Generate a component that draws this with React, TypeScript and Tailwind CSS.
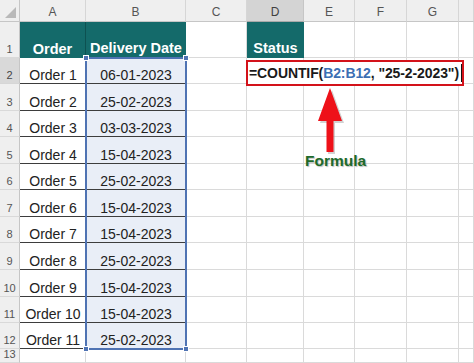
import React from "react";

const colLabels = ["A", "B", "C", "D", "E", "F", "G", ""];
const orders = Array.from({ length: 11 }, (_, i) => `Order ${i + 1}`);
const dates = [
  "06-01-2023",
  "25-02-2023",
  "03-03-2023",
  "15-04-2023",
  "25-02-2023",
  "15-04-2023",
  "15-04-2023",
  "25-02-2023",
  "15-04-2023",
  "15-04-2023",
  "25-02-2023",
];

function Cell({ r, c }: { r: number; c: number }) {
  // header row
  if (r === 0) {
    if (c === 0) {
      return (
        <div className="flex items-end justify-end p-[3px] bg-[#efefef] border-r border-b border-[#c6c6c6]">
          <svg width="11" height="11" viewBox="0 0 11 11">
            <polygon points="11,0 11,11 0,11" fill="#b9b9b9" />
          </svg>
        </div>
      );
    }
    const label = colLabels[c - 1];
    const sel = label === "D";
    return (
      <div
        className={
          sel
            ? "flex items-center justify-center bg-[#d4d4d4] border-r border-b border-r-[#c6c6c6] border-b-[#a9a9a9] text-[12px] leading-none text-[#3f3f3f] pt-[3px]"
            : "flex items-center justify-center bg-[#efefef] border-r border-b border-r-[#d6d6d6] border-b-[#c6c6c6] text-[12px] leading-none text-[#555555] pt-[3px]"
        }
      >
        {label}
      </div>
    );
  }
  // row header
  if (c === 0) {
    return (
      <div
        className={
          r === 2
            ? "flex items-end justify-center bg-[#d9d9d9] border-r border-b border-r-[#c6c6c6] border-b-[#d6d6d6] text-[11px] leading-none text-[#444444] pb-[2px]"
            : "flex items-end justify-center bg-[#efefef] border-r border-b border-r-[#c6c6c6] border-b-[#d9d9d9] text-[11px] leading-none text-[#555555] pb-[2px]"
        }
      >
        {r}
      </div>
    );
  }
  // row 1 headers
  if (r === 1) {
    if (c === 1 || c === 2 || c === 4) {
      const text = c === 1 ? "Order" : c === 2 ? "Delivery Date" : "Status";
      return (
        <div
          className={
            c === 1
              ? "flex items-end justify-center bg-[#146a6a] border-r border-[#0d5151] text-white font-bold text-[14.5px] leading-none pb-[2px]"
              : "flex items-end justify-center bg-[#146a6a] text-white font-bold text-[14.5px] leading-none pb-[2px] border-b border-[#146a6a]"
          }
        >
          {text}
        </div>
      );
    }
    return <div className="border-r border-b border-[#dadada] bg-white" />;
  }
  if (r >= 2 && r <= 12) {
    if (c === 1) {
      return (
        <div className="flex items-end justify-center bg-white border-b border-[#3d3d3d] text-[14px] leading-none text-[#222222] pb-[1px]">
          {orders[r - 2]}
        </div>
      );
    }
    if (c === 2) {
      return (
        <div className="flex items-end justify-center bg-[#e9eef7] border-b border-[#3d3d3d] text-[14px] leading-none text-[#222222] pb-[1px]">
          {dates[r - 2]}
        </div>
      );
    }
  }
  return <div className="border-r border-b border-[#dadada] bg-white" />;
}

export default function App() {
  const rows = Array.from({ length: 14 }, (_, i) => i);
  const cols = Array.from({ length: 9 }, (_, i) => i);
  return (
    <div
      className="relative w-[474px] h-[363px] overflow-hidden bg-white"
      style={{ fontFamily: '"Liberation Sans", Arial, sans-serif' }}
    >
      <div className="grid grid-cols-[20px_66px_100px_61px_57px_51px_52px_52px_15px] grid-rows-[22px_36px_26px_27px_26px_27px_26px_27px_26px_27px_27px_26px_26px_14px]">
        {rows.map((r) => cols.map((c) => <Cell key={`${r}-${c}`} r={r} c={c} />))}
      </div>

      {/* selection outline B2:B12 with corner handles */}
      <div className="absolute left-[85px] top-[57px] w-[102px] h-[293px] border-2 border-[#4f73b3] pointer-events-none flex flex-col justify-between">
        <div className="flex justify-between -mx-[4px] -mt-[4px]">
          <span className="w-[6px] h-[6px] bg-[#4f73b3] border border-white" />
          <span className="w-[6px] h-[6px] bg-[#4f73b3] border border-white" />
        </div>
        <div className="flex justify-between -mx-[4px] -mb-[4px]">
          <span className="w-[6px] h-[6px] bg-[#4f73b3] border border-white" />
          <span className="w-[6px] h-[6px] bg-[#4f73b3] border border-white" />
        </div>
      </div>

      {/* annotation: formula box, arrow and label */}
      <div className="absolute left-[246px] top-[60px] flex flex-col items-start">
        <div className="w-[218px] h-[26px] border-2 border-[#d3121a] bg-white flex items-center pl-[1px]">
          <span className="font-bold text-[14px] text-[#1a1a1a] tracking-[-0.1px] whitespace-nowrap">
            =COUNTIF(<span className="text-[#3c6fb4]">B2:B12</span>, "25-2-2023")
          </span>
          <span className="ml-[2px] w-px h-[18px] bg-[#111111]" />
        </div>
        <svg className="ml-[68px]" width="34" height="68" viewBox="0 0 34 68">
          <polygon points="18,4 30,37 21,37 21,68 14,68 14,37 6,37" fill="#9b9b9b" opacity="0.45" />
          <polygon points="16,2 28,35 19.5,35 19.5,66 12.5,66 12.5,35 4,35" fill="#ee1119" />
        </svg>
        <div
          className="ml-[59px] -mt-[1px] font-bold text-[15.5px] text-[#1d6a2a] leading-none"
          style={{ textShadow: "1px 1px 1px rgba(0,0,0,0.25)" }}
        >
          Formula
        </div>
      </div>
    </div>
  );
}
